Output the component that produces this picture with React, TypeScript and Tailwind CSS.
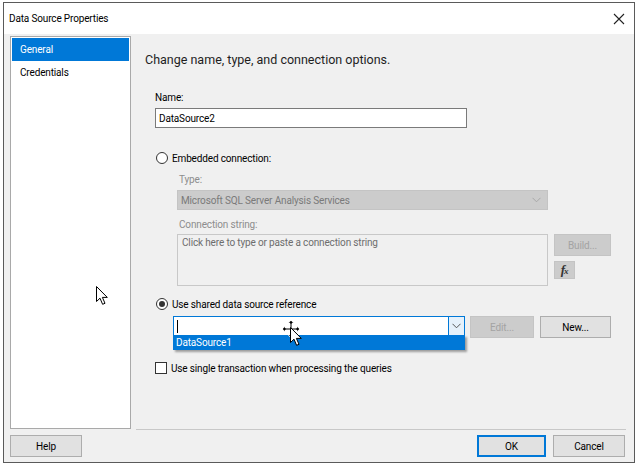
import React from "react";

const font = { fontFamily: 'Roboto, "Noto Sans", "Liberation Sans", sans-serif' };

function Arrow({ fill = "white" }: { fill?: string }) {
  return (
    <svg width="13" height="20" viewBox="0 0 13 20">
      <path d="M0.5 0.5 L0.5 15.5 L4 12.2 L6.6 18.3 L9 17.3 L6.4 11.4 L11.3 11.4 Z" fill={fill} stroke="black" strokeWidth="1" strokeLinejoin="miter" />
    </svg>
  );
}

function MoveCross() {
  return (
    <svg width="20" height="20" viewBox="0 0 20 20">
      <path d="M10 1 L13 4.5 L11 4.5 L11 9 L15.5 9 L15.5 7 L19 10 L15.5 13 L15.5 11 L11 11 L11 15.5 L13 15.5 L10 19 L7 15.5 L9 15.5 L9 11 L4.5 11 L4.5 13 L1 10 L4.5 7 L4.5 9 L9 9 L9 4.5 L7 4.5 Z" fill="black" stroke="white" strokeWidth="1" />
    </svg>
  );
}

function Radio({ checked }: { checked?: boolean }) {
  return (
    <span className="w-[12px] h-[12px] rounded-full border border-[#333333] bg-white flex items-center justify-center shrink-0">
      {checked && <span className="w-[6px] h-[6px] rounded-full bg-[#333333]" />}
    </span>
  );
}

function Chevron({ color }: { color: string }) {
  return (
    <svg width="9" height="6" viewBox="0 0 9 6">
      <path d="M0.5 0.8 L4.5 4.8 L8.5 0.8" fill="none" stroke={color} strokeWidth="1" />
    </svg>
  );
}

export default function App() {
  return (
    <div className="w-[640px] h-[467px] bg-white relative overflow-hidden text-[10px] tracking-[-0.15px] text-black" style={font}>
      <div className="ml-[3px] mt-[2px] w-[632px] h-[461px] border border-[#5a5a5a] flex flex-col bg-[#f0f0f0]">
        {/* Title bar */}
        <div className="h-[31px] bg-white flex items-center justify-between pl-[5px] pr-[9px] shrink-0">
          <span className="text-[10px] leading-none">Data Source Properties</span>
          <svg width="12" height="12" viewBox="0 0 12 12">
            <path d="M1 1 L11 11 M11 1 L1 11" stroke="#222" strokeWidth="1.1" />
          </svg>
        </div>
        {/* Body */}
        <div className="flex flex-1">
          {/* Left list */}
          <div className="ml-[6px] mt-[2px] w-[121px] h-[393px] bg-white border border-[#a9a9a9] p-[1px] shrink-0">
            <div className="h-[23px] bg-[#0078d7] text-white flex items-center pl-[8px]">General</div>
            <div className="h-[23px] flex items-center pl-[8px]">Credentials</div>
          </div>
          {/* Right panel */}
          <div className="flex-1 flex flex-col relative">
            <div className="flex flex-col pl-[4px]">
              <div className="pl-[10px] mt-[16px] h-[20px] flex items-center text-[12.5px] tracking-normal text-[#1e1e1e]">
                Change name, type, and connection options.
              </div>
              <div className="pl-[20px] mt-[19px] h-[16px] flex items-center">Name:</div>
              <div className="ml-[20px] mt-[3px] w-[312px] h-[20px] bg-white border border-[#7a7a7a] flex items-center pl-[3px]">
                DataSource2
              </div>
              <div className="ml-[21px] mt-[22px] h-[16px] flex items-center gap-[4px]">
                <Radio />
                <span>Embedded connection:</span>
              </div>
              <div className="ml-[44px] mt-[5px] h-[16px] flex items-center text-[#8d8d8d]">Type:</div>
              <div className="ml-[42px] mt-[3px] w-[371px] h-[20px] bg-[#cccccc] border border-[#c4c4c4] flex items-center justify-between pl-[3px] pr-[6px] text-[#7a7a7a]">
                <span>Microsoft SQL Server Analysis Services</span>
                <Chevron color="#a8a8a8" />
              </div>
              <div className="ml-[44px] mt-[6px] h-[16px] flex items-center text-[#8d8d8d]">Connection string:</div>
              <div className="ml-[42px] mt-[2px] flex gap-[6px]">
                <div className="w-[371px] h-[52px] border border-[#c8c8c8] bg-[#f0f0f0] pl-[4px] pt-0 text-[#6d6d6d]">
                  Click here to type or paste a connection string
                </div>
                <div className="flex flex-col gap-[5px]">
                  <div className="w-[57px] h-[22px] bg-[#cccccc] border border-[#c4c4c4] flex items-center justify-center text-[#a3a3a3]">Build...</div>
                  <div className="w-[21px] h-[18px] bg-[#cccccc] border border-[#c4c4c4] flex items-end justify-center pb-[2px] text-[#333] italic leading-none" style={{ fontFamily: '"Liberation Serif", serif' }}>
                    <span className="font-bold text-[13px]">f</span><span className="font-bold text-[9px] -ml-[1px]">x</span>
                  </div>
                </div>
              </div>
              <div className="ml-[21px] mt-[10px] h-[16px] flex items-center gap-[4px]">
                <Radio checked />
                <span>Use shared data source reference</span>
              </div>
              <div className="ml-[38px] mt-[4px] flex h-[22px] relative">
                <div className="w-[292px] h-[20px] bg-white border border-[#0078d7] flex items-center justify-between relative">
                  <span className="ml-[3px] w-[1px] h-[13px] bg-black" />
                  <div className="w-[16px] h-[18px] bg-[#e5f1fb] border-l border-[#0078d7] flex items-center justify-center">
                    <Chevron color="#555" />
                  </div>
                </div>
                <div className="ml-[5px] w-[64px] h-[22px] bg-[#cccccc] border border-[#c4c4c4] flex items-center justify-center text-[#a3a3a3]">Edit...</div>
                <div className="ml-[6px] w-[71px] h-[22px] bg-[#e1e1e1] border border-[#adadad] flex items-center justify-center">New...</div>
                {/* Dropdown list */}
                <div className="absolute left-0 top-[19px] w-[292px] h-[15px] bg-[#0078d7] text-white flex items-center pl-[3px] shadow-[2px_2px_2px_rgba(0,0,0,0.35)]">
                  DataSource1
                </div>
                <div className="absolute left-[108px] top-[3px]">
                  <MoveCross />
                </div>
                <div className="absolute left-[117px] top-[11px]">
                  <Arrow />
                </div>
              </div>
              <div className="ml-[20px] mt-[22px] h-[16px] flex items-center gap-[4px]">
                <span className="w-[12px] h-[12px] border border-[#333333] bg-white shrink-0" />
                <span>Use single transaction when processing the queries</span>
              </div>
            </div>
            <div className="flex-1" />
            <div className="ml-[5px] mr-[8px] mb-[-1px] h-[1px] bg-[#c8c8c8]" />
          </div>
        </div>
        {/* Footer */}
        <div className="h-[34px] flex items-start pt-[6px] shrink-0">
          <div className="ml-[6px] w-[72px] h-[22px] bg-[#e1e1e1] border border-[#adadad] flex items-center justify-center">Help</div>
          <div className="flex-1" />
          <div className="w-[69px] h-[22px] bg-[#e1e1e1] border-2 border-[#0078d7] flex items-center justify-center">OK</div>
          <div className="ml-[7px] mr-[9px] w-[72px] h-[22px] bg-[#e1e1e1] border border-[#adadad] flex items-center justify-center">Cancel</div>
        </div>
      </div>
      {/* Stray pointer cursor */}
      <div className="absolute left-[96px] top-[286px]">
        <Arrow />
      </div>
    </div>
  );
}
